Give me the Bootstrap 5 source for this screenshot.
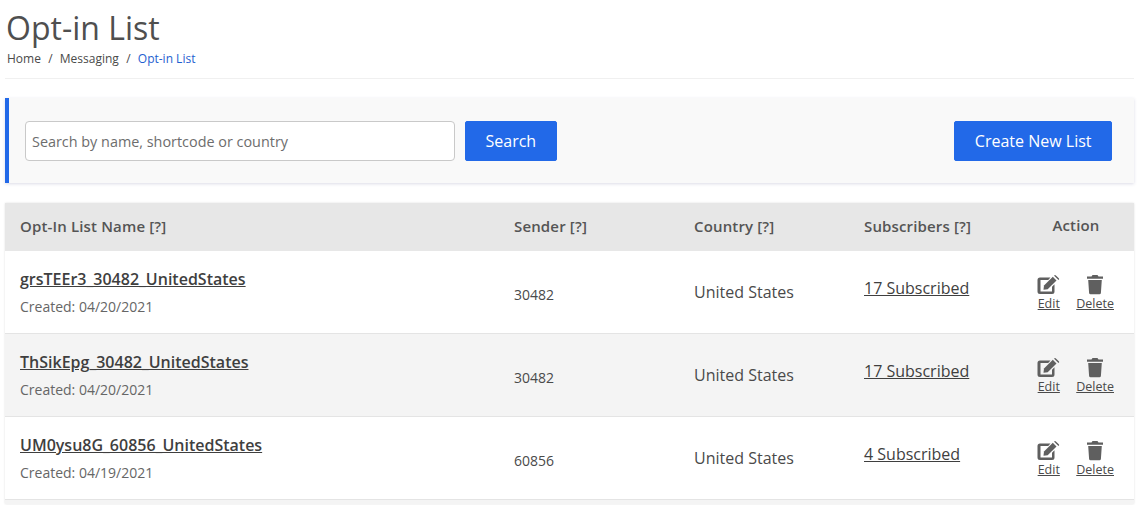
<!DOCTYPE html>
<html lang="en">

<head>
    <meta charset="UTF-8">
    <meta name="viewport" content="width=device-width, initial-scale=1.0">
    <title>Opt-in List</title>
    <link href="https://cdn.jsdelivr.net/npm/bootstrap@5.3.0/dist/css/bootstrap.min.css" rel="stylesheet">
    <style>
        html, body {
            height: 505px;
            overflow: hidden;
        }

        body {
            font-family: "Open Sans", sans-serif;
            color: #4a4a4a;
            background-color: #fff;
        }

        .page-wrap {
            padding: 0 3px 0 5px;
        }

        .page-head {
            height: 79px;
            padding: 6px 0 0 0;
            border-bottom: 1px solid #f0f0f0;
        }

        .page-title {
            font-size: 32px;
            line-height: 44px;
            font-weight: 400;
            color: #4f4f4f;
            margin: 0 0 0 1px;
        }

        .crumbs {
            font-size: 12px;
            line-height: 16px;
            margin: 1px 0 0 2px;
        }

        .crumbs .breadcrumb-item,
        .crumbs .breadcrumb-item::before,
        .crumbs .breadcrumb-item + .breadcrumb-item::before {
            color: #4a4a4a;
        }

        .crumbs .breadcrumb-item + .breadcrumb-item {
            padding-left: 7.25px;
        }

        .crumbs .breadcrumb-item + .breadcrumb-item::before {
            padding-right: 7.25px;
        }

        .crumbs a {
            color: #4a4a4a;
            text-decoration: none;
        }

        .crumbs .breadcrumb-item.active {
            color: #1f5fd0;
        }

        .search-panel {
            height: 85px;
            margin-top: 19px;
            padding: 0 22px 0 16px;
            background-color: #f9f9f9;
            border-left: 4px solid #2269e8;
            box-shadow: 0 1px 3px rgba(60, 60, 120, 0.18);
        }

        .search-input {
            width: 430px;
            height: 40px;
            font-size: 14.4px;
            padding: 2px 6px 0;
            color: #4a4a4a;
            border: 1px solid #c9c9c9;
            border-radius: 4px;
        }

        .search-input::placeholder {
            color: #6d6d6d;
            opacity: 1;
        }

        .btn-blue {
            height: 40px;
            padding: 1px 19.5px 0;
            font-size: 16px;
            color: #fff;
            background-color: #2269e8;
            border-color: #2269e8;
            border-radius: 2px;
        }

        .search-form {
            gap: 10px;
        }

        .list-table {
            margin-top: 20px;
            margin-bottom: 0;
            table-layout: fixed;
            width: 100%;
            color: #4a4a4a;
            border-collapse: separate;
            border-spacing: 0;
            box-shadow: 0 0 2px rgba(0, 0, 0, 0.12);
        }

        .list-table > thead > tr > th {
            height: 48px;
            padding: 0 0 1px 15px;
            font-size: 15px;
            font-weight: 600;
            letter-spacing: 0.15px;
            vertical-align: middle;
            color: #555;
            background-color: #e7e7e7;
            border: 0;
            box-shadow: none;
        }

        .list-table > thead > tr > th.action-head {
            padding: 0 0 4px 9px;
            text-align: center;
        }

        .list-table > tbody > tr > td {
            height: 83px;
            padding: 0 0 0 15px;
            vertical-align: middle;
            background-color: #fff;
            color: #4a4a4a;
            border-bottom: 1px solid #e4e4e4;
            box-shadow: none;
        }

        .list-table > tbody > tr.shaded > td {
            background-color: #f4f4f4;
        }

        .list-table > tbody > tr.fold-row > td {
            height: 4px;
            border-bottom: 0;
        }

        .list-table > tbody > tr > td.sender-cell {
            padding-top: 4px;
            font-size: 14px;
        }

        .list-table > tbody > tr > td.country-cell {
            padding-bottom: 1px;
            font-size: 16px;
        }

        .list-table > tbody > tr > td.subs-cell {
            padding-bottom: 9px;
        }

        .list-name {
            display: block;
            margin-top: 1px;
            font-size: 16px;
            font-weight: 600;
            line-height: 20px;
            color: #3f3f3f;
        }

        .list-date {
            display: block;
            margin-top: 9px;
            font-size: 14px;
            line-height: 18px;
            color: #666;
        }

        .subs-link {
            font-size: 16px;
            color: #3f3f3f;
        }

        .row-actions {
            padding-right: 20px;
            gap: 16px;
        }

        .act-link {
            font-size: 12.5px;
            line-height: 14px;
            color: #4a4a4a;
            text-align: center;
        }

        .act-link svg {
            display: block;
            margin: 0 auto 2px;
            fill: #5f5f5f;
        }
    </style>
</head>

<body>
    <div class="page-wrap">
        <!-- Title and breadcrumb -->
        <div class="page-head">
            <h1 class="page-title">Opt-in List</h1>
            <nav aria-label="breadcrumb">
                <ol class="breadcrumb crumbs">
                    <li class="breadcrumb-item"><a href="#">Home</a></li>
                    <li class="breadcrumb-item"><a href="#">Messaging</a></li>
                    <li class="breadcrumb-item active" aria-current="page">Opt-in List</li>
                </ol>
            </nav>
        </div>

        <!-- Search bar -->
        <div class="search-panel d-flex align-items-center justify-content-between">
            <form class="search-form d-flex" onsubmit="return false">
                <input type="text" class="form-control search-input" placeholder="Search by name, shortcode or country">
                <button class="btn btn-blue">Search</button>
            </form>
            <button class="btn btn-blue">Create New List</button>
        </div>

        <!-- Lists -->
        <table class="table list-table">
            <colgroup>
                <col style="width: 494px">
                <col style="width: 180px">
                <col style="width: 170px">
                <col style="width: 160px">
                <col>
            </colgroup>
            <thead>
                <tr>
                    <th>Opt-In List Name [?]</th>
                    <th>Sender [?]</th>
                    <th>Country [?]</th>
                    <th>Subscribers [?]</th>
                    <th class="action-head">Action</th>
                </tr>
            </thead>
            <tbody id="listRows"></tbody>
        </table>
    </div>

    <script src="https://cdn.jsdelivr.net/npm/bootstrap@5.3.0/dist/js/bootstrap.bundle.min.js"></script>
    <script>
        const lists = [
            { name: 'grsTEEr3_30482_UnitedStates', created: '04/20/2021', sender: '30482', subs: 17 },
            { name: 'ThSikEpg_30482_UnitedStates', created: '04/20/2021', sender: '30482', subs: 17 },
            { name: 'UM0ysu8G_60856_UnitedStates', created: '04/19/2021', sender: '60856', subs: 4 }
        ];

        const editIcon = '<svg width="23" height="21" viewBox="0 0 23 20"><path d="M3 3h10.500l-2.300 2.500H3.500v11.500h11.500v-4.800l2.500-2.500V17a2.500 2.500 0 0 1-2.500 2.500H3A2.500 2.500 0 0 1 0.500 17V5.500A2.500 2.500 0 0 1 3 3z"/><path d="M7 11 15.800 2.200l3.700 3.700L10.700 14.700 6.500 15.200z"/><path d="M17.200 0.900a1.200 1.200 0 0 1 1.700 0l2.900 2.900a1.200 1.200 0 0 1 0 1.700L20.700 4.800 16.900 1.100z"/></svg>';
        const trashIcon = '<svg width="18" height="21" viewBox="0 0 18 20"><path d="M6.500 0.500h5L12.500 2H17v2.200H1V2h4.500z"/><path d="M2.200 5.500h13.600l-0.900 13a1.500 1.500 0 0 1-1.500 1.300H4.600a1.500 1.500 0 0 1-1.500-1.300z"/></svg>';

        const rows = lists.map((item, i) => `
            <tr class="${i % 2 ? 'shaded' : ''}">
                <td>
                    <a href="#" class="list-name">${item.name}</a>
                    <span class="list-date">Created: ${item.created}</span>
                </td>
                <td class="sender-cell">${item.sender}</td>
                <td class="country-cell">United States</td>
                <td class="subs-cell"><a href="#" class="subs-link">${item.subs} Subscribed</a></td>
                <td class="action-cell">
                    <div class="row-actions d-flex justify-content-end">
                        <a href="#" class="act-link">${editIcon}Edit</a>
                        <a href="#" class="act-link">${trashIcon}Delete</a>
                    </div>
                </td>
            </tr>`);

        // top of the next row, the rest is below the fold
        rows.push('<tr class="shaded fold-row"><td colspan="5"></td></tr>');
        document.getElementById('listRows').innerHTML = rows.join('');
    </script>
</body>

</html>
